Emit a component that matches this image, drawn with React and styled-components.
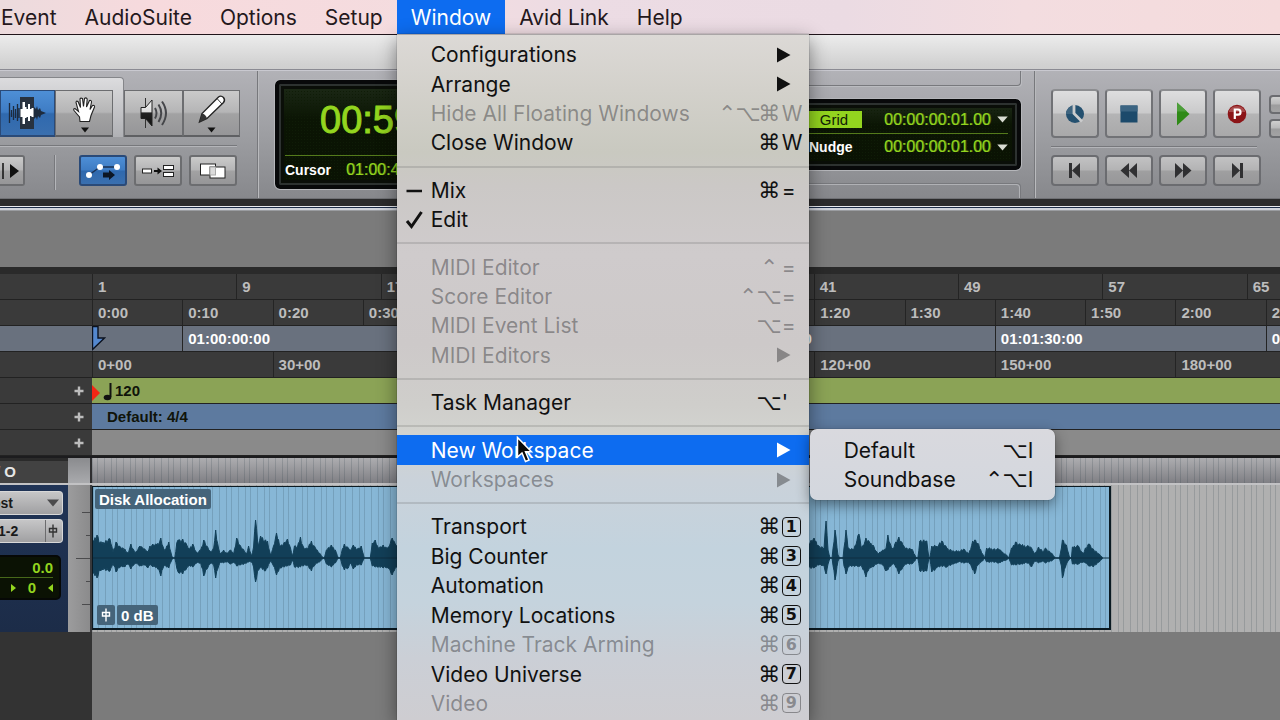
import React from "react";
import styled, { createGlobalStyle, css } from "styled-components";

const Global = createGlobalStyle`
  *, *::before, *::after { box-sizing: border-box; }
  html, body { margin: 0; height: 100%; overflow: hidden; }
  #root { height: 100%; }
  button, select { font: inherit; color: inherit; margin: 0; padding: 0; border: 0; background: none; text-align: left; appearance: none; }
  svg { display: block; flex-shrink: 0; }
`;

const ui = `Inter, "Liberation Sans", sans-serif`;
const app = `"Liberation Sans", Arial, sans-serif`;
const symbol = `"DejaVu Sans", sans-serif`;
const lime = "#93d51f";

const Screen = styled.div`
  display: flex;
  flex-direction: column;
  min-height: 100vh;
  background: #7b7b7b;
  font-family: ${app};
`;

/* ---------- system menu bar ---------- */

const MenuBar = styled.nav`
  display: flex;
  height: 35px;
  padding-left: 1px;
  border-bottom: 1px solid #20141a;
  background: linear-gradient(90deg, #ecdbdd 0, #f7dadd 12%, #f4dcdf 34%, #ecdce4 45%, #ebdbe3 66%, #f3dde0 80%, #f5dbdc 100%);
  font-family: ${ui};
  font-size: 21px;
  color: #24181c;
`;

const BarSlot = styled.div`
  position: relative;
`;

const BarItem = styled.button`
  height: 34px;
  padding: 0 14px;
  white-space: nowrap;
  ${(p) => p.$flush && css`padding-left: 0;`}
  ${(p) => p.$active && css`background: #0d6cf0; color: #fff;`}
`;

const Dropdown = styled.div`
  position: absolute;
  z-index: 5;
  top: 34px;
  left: 0;
  width: 412px;
  height: calc(100vh - 34px);
  display: flex;
  flex-direction: column;
  padding: 5px 0 2px;
  border-top: 1px solid #a9a5a6;
  background: linear-gradient(180deg, #dcd9d6 0, #d3d1cb 8%, #c9c9c0 17%, #cbc8c6 22%, #cfcbcc 32%, #cdc9c9 45%, #cfcecb 54%, #d2d3cf 58%, #cad2da 65%, #c3d3de 75%, #c5d3dd 83%, #cbcfd6 91%, #cecdd1 100%);
  box-shadow: 0 6px 18px rgba(0, 0, 0, 0.45), 0 0 1px rgba(0, 0, 0, 0.5);
  color: #111;
`;

const Submenu = styled.div`
  position: absolute;
  z-index: 6;
  top: -6px;
  left: 100%;
  width: 245px;
  margin-left: 1px;
  padding: 7px 0 6px;
  border-radius: 7px;
  background: linear-gradient(180deg, #d9d9de, #d3d7de);
  box-shadow: 0 5px 14px rgba(0, 0, 0, 0.45), 0 0 1px rgba(0, 0, 0, 0.6);
  color: #111;
`;

const RowSlot = styled.div`
  position: relative;
  display: flex;
  flex: 1 1 29px;
`;

const Row = styled.button`
  display: grid;
  flex: 1;
  grid-template-columns: 26px 1fr auto 20px;
  align-items: center;
  min-height: 29px;
  padding: 0 9px 0 8px;
  line-height: 29px;
  white-space: nowrap;
  ${(p) => p.$active && css`background: #0d6cf0; color: #fff;`}
  &:disabled { color: rgba(40, 40, 44, 0.42); }
`;

const Rule = styled.hr`
  flex: 0 0 2px;
  margin: 8px 0;
  border: 0;
  background: rgba(90, 90, 90, 0.2);
`;

const Modifiers = styled.span`
  display: flex;
  font-family: ${symbol};
  font-size: 22px;
`;

const Modifier = styled.span`
  display: flex;
  justify-content: center;
  width: 21px;
`;

const KeyCap = styled.kbd`
  font-family: ${ui};
  font-size: 21px;
  padding-left: 2px;
  ${(p) => p.$boxed && css`
    width: 19px;
    height: 20px;
    margin-left: 2px;
    padding: 0;
    border: 1px solid currentColor;
    border-radius: 4px;
    font-family: ${symbol};
    font-size: 16px;
    font-weight: bold;
    line-height: 18px;
    text-align: center;
  `}
`;

const Pointer = styled.svg`
  position: absolute;
  z-index: 8;
  left: 119px;
  top: 1px;
`;

/* ---------- toolbar ---------- */

const TitleStrip = styled.header`
  height: 35px;
  border-bottom: 1px solid #8b8b93;
  background: linear-gradient(180deg, #ececec, #d2d2d2 85%, #cfcfcf);
`;

const Toolbar = styled.section`
  display: flex;
  height: 129px;
  border-top: 1px solid #c9c9d0;
  border-bottom: 1px solid #6f7074;
  background: linear-gradient(180deg, #b2b2b7, #9b9ca0 55%, #87888c);
`;

const ToolSection = styled.div`
  width: 258px;
  padding-top: 6px;
  border-right: 1px solid #77787c;
  overflow: hidden;
`;

const ToolRow = styled.div`
  display: flex;
  align-items: flex-end;
`;

const SmartFrame = styled.div`
  display: flex;
  padding: 12px 10px 0 0;
  border: 1px solid #85868a;
  border-width: 1px 1px 0 0;
  border-radius: 0 4px 0 0;
  background: linear-gradient(180deg, #dcdcde, #b0b1b5);
`;

const face = css`
  display: flex;
  align-items: center;
  justify-content: center;
  border: 1px solid #6c6d70;
  background: linear-gradient(180deg, #cacaca, #b5b5b6 48%, #a2a2a3 52%, #969698);
`;

const blueFace = css`
  border-color: #2a4a78;
  background: linear-gradient(180deg, #4e8fd6, #3e7cc4 48%, #2f69ae 52%, #3a6faf);
`;

const ToolButton = styled.button`
  ${face}
  width: ${(p) => p.$w}px;
  height: 47px;
  border-bottom: 2px solid #5f6063;
  ${(p) => p.$on && blueFace}
`;

const Groove = styled.hr`
  height: 2px;
  margin: 8px ${(p) => p.$right}px 0 0;
  border: 0;
  border-top: 1px solid #77787c;
  border-bottom: 1px solid #b4b5b9;
`;

const ModeRow = styled.div`
  display: flex;
  margin-top: 8px;
`;

const ModeButton = styled.button`
  ${face}
  width: 48px;
  height: 31px;
  margin-right: 7px;
  border-width: 2px;
  border-radius: 3px;
  ${(p) => p.$on && blueFace}
  ${(p) => p.$cut && css`width: 25px; border-left: 0; border-radius: 0 3px 3px 0; margin-right: 0;`}
`;

const Divider = styled.span`
  width: 2px;
  height: 35px;
  margin: 0 23px 0 29px;
  border-left: 1px solid #77787c;
  border-right: 1px solid #b4b5b9;
`;

const CounterSection = styled.div`
  display: flex;
  flex: 1;
  gap: 20px;
  padding: 0 14px 0 16px;
  border-left: 1px solid #b9babd;
`;

const Lcd = styled.div`
  border: 4px solid #08090a;
  border-radius: 5px;
  outline: 1px solid #b5b6ba;
  outline-offset: 0;
  background: radial-gradient(#0f1c07 1px, transparent 1px) 0 0 / 3px 3px, linear-gradient(180deg, #1d2a17, #0b1504 35%, #0a1203);
  box-shadow: inset 0 0 0 2px #2d3230, inset 0 0 0 5px #0a0e08;
  color: ${lime};
`;

const MainCounter = styled(Lcd)`
  flex: 0 0 44%;
  height: 109px;
  margin-top: 9px;
  padding: 5px 6px;
  overflow: hidden;
`;

const BigTime = styled.div`
  height: 67px;
  padding-left: 35px;
  border-bottom: 1px solid #547a1b;
  font-size: 38px;
  line-height: 62px;
  -webkit-text-stroke: 1px ${lime};
`;

const CursorLine = styled.div`
  display: flex;
  gap: 15px;
  line-height: 28px;
  font-size: 16px;
  text-shadow: 1px 0 0 rgba(147, 213, 31, 0.5);
`;

const LcdLabel = styled.span`
  color: #fff;
  font-size: 14px;
  font-weight: bold;
  text-shadow: none;
`;

const GridStack = styled.div`
  display: flex;
  flex: 1;
  flex-direction: column;
  justify-content: space-between;
`;

const Bracket = styled.div`
  height: 15px;
  border: 1px solid #78797d;
  box-shadow: 1px 1px 0 #bbbcc0;
  ${(p) => p.$top
    ? css`border-top: 0; border-radius: 0 0 4px 4px;`
    : css`border-bottom: 0; border-radius: 4px 4px 0 0; box-shadow: inset -1px 1px 0 #b0b1b5;`}
`;

const GridLcd = styled(Lcd)`
  height: 71px;
  padding: 3px 9px 7px 6px;
`;

const GridLine = styled.div`
  display: flex;
  align-items: center;
  justify-content: flex-end;
  height: 27px;
  gap: 22px;
  & + & { border-top: 1px solid #547a1b; }
`;

const GridName = styled.button`
  width: 56px;
  height: 17px;
  font-size: 15px;
  line-height: 17px;
  text-align: center;
  background: ${lime};
  color: #122106;
`;

const NudgeName = styled(LcdLabel)`
  width: 53px;
  line-height: 17px;
`;

const Picker = styled.label`
  display: grid;
  align-items: center;
  & > * { grid-area: 1 / 1; }
  & > :last-child { justify-self: end; pointer-events: none; }
`;

const TimeSelect = styled.select`
  width: 124px;
  font-size: 16px;
  line-height: 18px;
  text-shadow: 1px 0 0 rgba(147, 213, 31, 0.5);
`;

const TransportSection = styled.div`
  display: flex;
  gap: 8px;
  width: 245px;
  overflow: hidden;
  padding: 18px 0 0 15px;
  border-left: 1px solid #b9babd;
  box-shadow: -1px 0 0 #77787c;
`;

const TransportBlock = styled.div`
  flex: 0 0 210px;
`;

const TransportRow = styled.div`
  display: flex;
  justify-content: space-between;
  & + hr + & { margin-top: 7px; }
`;

const TransportButton = styled.button`
  ${face}
  width: 48px;
  height: ${(p) => p.$h}px;
  border: 2px solid #717276;
  border-top-color: #8c8d90;
  border-radius: 4px;
  background: linear-gradient(180deg, #dededf, #cacacb 48%, #b4b4b5 52%, #a9a9aa);
  ${(p) => p.$h < 40 && css`
    background: linear-gradient(180deg, #c2c2c3, #b3b3b4 48%, #9f9fa0 52%, #979799);
    border-color: #6b6c70;
  `}
`;

const SideButtons = styled.div`
  display: flex;
  flex-direction: column;
  gap: 5px;
  padding-top: 6px;
`;

const SideButton = styled.button`
  width: 24px;
  height: 19px;
  border: 2px solid #6b6c70;
  border-radius: 4px;
  background: linear-gradient(180deg, #cfcfcf, #b8b8b9 48%, #9c9c9d 52%, #a3a3a4);
`;

const WindowEdge = styled.div`
  height: 12px;
  border-top: 7px solid #2b2b2c;
  background: linear-gradient(180deg, #e8eaee 0 1px, #1c2c48 1px 2px, #cfd3db 2px 4px, #9a9ca0 4px);
`;

const Universe = styled.div`
  height: 56px;
  background: #7b7b7b;
`;

const DarkBand = styled.div`
  height: 7px;
  background: #2a2a2a;
`;

/* ---------- rulers ---------- */

const RulerRow = styled.div`
  display: flex;
  height: 26px;
  border-bottom: 1px solid #222;
  background: ${(p) => p.$bg || "#3a3a3a"};
  color: ${(p) => p.$color || "#bdbdbd"};
  font-size: 15px;
  font-weight: bold;
  line-height: 25px;
`;

const RulerHead = styled.div`
  display: flex;
  align-items: center;
  justify-content: flex-end;
  flex: 0 0 92px;
  padding-right: 7px;
  background: ${(p) => (p.$open ? "transparent" : "#3a3a3a")};
`;

const AddButton = styled.button`
  width: 12px;
  height: 12px;
`;

const Ticks = styled.div`
  display: flex;
  flex: 1;
  min-width: 0;
  overflow: hidden;
`;

const Tick = styled.span`
  flex: 0 0 ${(p) => p.$w}%;
  padding-left: 5px;
  border-left: 1px solid #242424;
  white-space: nowrap;
`;

const StartMark = styled.span`
  flex: 0 0 7.6%;
`;

const EventText = styled.span`
  display: flex;
  align-items: center;
  gap: 3px;
  padding-left: ${(p) => p.$pad}px;
  color: #10140a;
`;

/* ---------- track ---------- */

const stripes = `repeating-linear-gradient(90deg, rgba(30,50,60,0.17) 0 1px, transparent 1px 5px, rgba(30,50,60,0.17) 5px 6px, transparent 6px 12px, rgba(30,50,60,0.17) 12px 13px, transparent 13px 19px)`;

const TrackHead = styled.div`
  display: flex;
  height: 29px;
  border-top: 2px solid #1c1c1e;
  border-bottom: 2px solid #c2c2c4;
`;

const IoTitle = styled.h2`
  flex: 0 0 68px;
  margin: 0;
  overflow: hidden;
  border-top: 3px solid #2a2a2a;
  background: #424242;
  color: #e6e6e6;
  font-size: 15px;
  line-height: 22px;
  text-indent: -4px;
`;

const HeadCap = styled.div`
  flex: 0 0 24px;
  border-right: 2px solid #2e2e30;
  background: linear-gradient(180deg, #8a8b8e, #a9aaad);
`;

const HeadLane = styled.div`
  flex: 1;
  background: ${stripes}, linear-gradient(180deg, #adadb0, #7f7f84);
`;

const TrackBody = styled.div`
  display: flex;
  height: 147px;
`;

const IoPanel = styled.div`
  display: flex;
  flex: 0 0 68px;
  flex-direction: column;
  gap: 4px;
  overflow: hidden;
  padding: 6px 5px 0 0;
  background: linear-gradient(180deg, #203456, #1c2c48);
  color: #1a1a1a;
  font-size: 14px;
  font-weight: bold;
`;

const IoPicker = styled(Picker)`
  height: 24px;
  padding-right: 3px;
  border: 1px solid #d8d8d8;
  border-left: 0;
  border-radius: 0 4px 4px 0;
  background: linear-gradient(180deg, #c6c6c7, #a0a0a2);
`;

const IoSelect = styled.select`
  width: 40px;
  text-indent: ${(p) => p.$shift}px;
`;

const FaderCell = styled.span`
  display: grid;
  place-items: center;
  width: 14px;
  height: 22px;
  border-left: 1px solid #6c6c6e;
`;

const PanLcd = styled.div`
  height: 45px;
  margin: 8px 2px 0 0;
  padding: 0 6px 0 0;
  border: 2px solid #060806;
  border-left: 0;
  border-radius: 0 5px 5px 0;
  background: #0b1204;
  color: ${lime};
  font-size: 15px;
`;

const PanLine = styled.div`
  display: flex;
  align-items: center;
  justify-content: flex-end;
  gap: 12px;
  height: 20px;
  & + & { border-top: 1px solid #47681a; }
`;

const Scale = styled.div`
  display: flex;
  flex: 0 0 24px;
  justify-content: flex-end;
  border-right: 2px solid #39393b;
  background: linear-gradient(90deg, #9c9c9d, #8b8b8c);
`;

const Lane = styled.div`
  flex: 1;
  min-width: 0;
  padding: 1px 0 2px;
  background: ${stripes}, #b0b0b0;
`;

const Clip = styled.article`
  position: relative;
  width: 85.8%;
  height: 144px;
  border: 1px solid #0b1a22;
  border-width: 1px 2px 2px 1px;
  background: ${stripes}, #87b7d6;
`;

const Wave = styled.svg`
  width: 100%;
  height: 141px;
`;

const ClipTag = styled.span`
  display: inline-flex;
  align-items: center;
  height: 20px;
  padding: 0 4px;
  border-radius: 2px;
  background: #45647a;
  color: #fff;
  font-size: 15px;
  font-weight: bold;
`;

const ClipName = styled(ClipTag)`
  position: absolute;
  left: 2px;
  top: 2px;
`;

const ClipGain = styled.div`
  position: absolute;
  left: 4px;
  bottom: 3px;
  display: flex;
  gap: 2px;
`;

const Rest = styled.div`
  flex: 1;
  background: linear-gradient(90deg, #333 0 92px, #7b7b7b 92px);
`;

/* ---------- drawings ---------- */

const Arrow = () => (
  <svg width="14" height="16" viewBox="0 0 14 16"><path d="M0 0.5L13.5 8L0 15.5Z" fill="currentColor" /></svg>
);
const Down = ({ w = 11, h = 7, color = "#d8dcd2" }) => (
  <svg width={w} height={h} viewBox="0 0 12 8"><path d="M0 0.5H12L6 7.5Z" fill={color} /></svg>
);
const Check = () => (
  <svg width="20" height="20" viewBox="0 0 20 20"><path d="M2 11L6.5 16.5L16.500 2" fill="none" stroke="currentColor" strokeWidth="3" /></svg>
);
const Dash = () => (
  <svg width="20" height="20" viewBox="0 0 20 20"><path d="M1.5 11H17" stroke="currentColor" strokeWidth="2.5" /></svg>
);
const Plus = () => (
  <svg width="12" height="12" viewBox="0 0 12 12"><path d="M6 1.5V10.5M1.5 6H10.5" stroke="#bcbcbc" strokeWidth="2.4" /></svg>
);
const Fader = ({ color }) => (
  <svg width="10" height="14" viewBox="0 0 10 14"><path d="M5 0.5V13.5M1.5 4.5H8.5V8H1.5Z" fill="none" stroke={color} strokeWidth="1.4" /></svg>
);

const SelectorIcon = () => (
  <svg width="40" height="36" viewBox="0 0 40 36">
    <rect x="12" y="2" width="14" height="32" fill="#28323f" />
    <path d="M1.500 8V28M3.500 15V22M5.500 11V25M7.500 14V23M9.500 9V26M11 13V23" stroke="#1d2b3d" strokeWidth="1.300" />
    <path d="M26 12L28 14L29 11L30 15L32 13L33 16L38 18L33 20L32 23L30 21L29 25L28 22L26 24Z" fill="#1d2b3d" />
    <path d="M12.500 14H14.500V7H17V12H18.500V14H20V9H22V14H23.500V13H25.500V22H23.500V21H22V26H20V22H18.500V23H17V29H14.500V22H12.500Z" fill="#fff" />
  </svg>
);
const HandIcon = () => (
  <svg width="26" height="40" viewBox="0 0 26 40">
    <path d="M9 28.500L8.500 24L3 17.500Q2 15.500 4 15.500L7.500 18.500L5 9.500Q5 7.500 7 8.500L9.500 14.500L9 6Q9.500 4.500 11.500 5.500L12.500 13.500L13.500 5.500Q15 4 16.200 6L15.500 14L18.500 7.500Q20.500 7 20.500 9L19 16.500L21.500 12.500Q24 12 23.500 14L20 22.500L18.500 28.500Z" fill="#fff" stroke="#222" strokeWidth="1.1" />
    <path d="M10 34.500H18L14 39.500Z" fill="#111" />
  </svg>
);
const SpeakerIcon = () => (
  <svg width="30" height="34" viewBox="0 0 30 34">
    <defs><linearGradient id="cone" x1="0" y1="0" x2="0" y2="1"><stop offset="0" stopColor="#f4f4f4" /><stop offset=".45" stopColor="#ddd" /><stop offset=".5" stopColor="#222" /><stop offset="1" stopColor="#111" /></linearGradient></defs>
    <path d="M6.500 2V32" stroke="#333" strokeWidth="1" />
    <path d="M2 11.500H6.500L13 4V30L6.500 22.500H2Z" fill="url(#cone)" stroke="#222" />
    <path d="M16 12Q19 17 16 22.500M19.500 8.500Q25 17 19.500 26M23 5.500Q31 17 23 29" fill="none" stroke="#45464a" strokeWidth="2" />
  </svg>
);
const PencilIcon = () => (
  <svg width="30" height="40" viewBox="0 0 30 40">
    <path d="M2.500 29L5 20.500L21.500 4Q24 2 26.500 4.500Q28.500 7 26.500 9.500L10 25.500Z" fill="#fff" stroke="#222" strokeWidth="1.400" />
    <path d="M2.500 29L5 20.500Q8.500 21 10 25.500Z" fill="#333" />
    <path d="M20 5.500L25 11" stroke="#333" />
    <path d="M10.500 34.500H18.500L14.500 39.500Z" fill="#111" />
  </svg>
);
const TabIcon = () => (
  <svg width="24" height="20" viewBox="0 0 24 20"><path d="M3 2V18" stroke="#111" strokeWidth="1.500" /><path d="M10 3L19 10L10 17Z" fill="#111" /></svg>
);
const AutomationIcon = () => (
  <svg width="38" height="20" viewBox="0 0 38 20">
    <path d="M5 14L16 6H33" fill="none" stroke="#1b3050" strokeWidth="1.300" />
    <circle cx="5" cy="14" r="3" fill="#fff" /><circle cx="16" cy="6" r="3" fill="#fff" /><circle cx="33" cy="6" r="3" fill="#fff" />
    <path d="M19 11.500H25V9L31 14L25 19V16.500H19Z" fill="#0c1624" />
  </svg>
);
const MirrorIcon = () => (
  <svg width="34" height="16" viewBox="0 0 34 16">
    <rect x="1.500" y="6" width="9" height="4" fill="#fff" stroke="#222" />
    <path d="M13 8H18" stroke="#111" strokeWidth="2" /><path d="M16.500 4.500L21 8L16.500 11.500Z" fill="#111" />
    <rect x="22.500" y="2.500" width="10" height="4" fill="#fff" stroke="#222" /><rect x="22.500" y="9.500" width="10" height="4" fill="#fff" stroke="#222" />
  </svg>
);
const LayersIcon = () => (
  <svg width="28" height="18" viewBox="0 0 28 18">
    <rect x="1.500" y="2" width="15" height="11" fill="#fff" stroke="#222" />
    <rect x="11" y="5" width="15" height="11" fill="#fff" stroke="#222" />
    <rect x="11" y="5" width="5.500" height="8" fill="#dcdcdc" stroke="#aaa" />
  </svg>
);
const OnlineIcon = () => (
  <svg width="20" height="20" viewBox="0 0 20 20">
    <circle cx="10" cy="10" r="9" fill="#24506f" />
    <path d="M1 10A9 9 0 0 1 10 1V10Z" fill="#3f6580" />
    <path d="M9 0V9.500L17 17.500" fill="none" stroke="#cbcccd" strokeWidth="2.800" />
  </svg>
);
const StopIcon = () => (
  <svg width="18" height="18" viewBox="0 0 18 18"><rect x="0.500" y="0.500" width="17" height="17" fill="#1c4a6b" /><rect x="0.500" y="0.500" width="17" height="6" fill="#3b6482" /></svg>
);
const PlayIcon = () => (
  <svg width="14" height="24" viewBox="0 0 14 24"><path d="M1 0.500L13.500 12L1 23.500Z" fill="#2f8a17" /><path d="M1 0.500L11 9.500H1Z" fill="#4d9e3a" /></svg>
);
const PunchIcon = () => (
  <svg width="20" height="20" viewBox="0 0 20 20">
    <circle cx="10" cy="10" r="9.300" fill="#8c1518" /><path d="M1.500 8A9 9 0 0 1 18.500 8Z" fill="#a84a4b" />
    <path d="M7.800 15V5.500H11Q13.500 5.500 13.500 8.200Q13.500 10.700 11 10.700H8" fill="none" stroke="#fff" strokeWidth="2.200" />
  </svg>
);
const Seek = ({ d }) => (
  <svg width="18" height="15" viewBox="0 0 18 15"><path d={d} fill="#303032" /></svg>
);

/* envelope of the recording: [x, above, below], in lane pixels */
const envelope = `0,17,15 4,23,20 7,15,12 10,16,12 17,19,13 20,6,5 23,16,14 28,10,8 32,9,9 35,5,6 38,14,11 42,5,5 47,12,8 52,9,7 55,6,10 57,12,7 60,14,9 64,13,9 68,20,18 71,9,8 73,9,8 76,16,10 79,2,2 80,0,0 82,0,0 84,15,10 86,18,15 90,19,16 94,13,10 96,9,8 100,14,9 104,5,5 108,8,5 111,18,18 115,11,10 118,6,5 121,10,7 123,28,20 126,9,8 128,4,4 131,8,5 134,5,4 138,8,6 141,4,4 144,20,8 148,12,7 154,4,5 156,12,4 159,2,4 161,11,9 163,38,24 166,12,12 168,22,9 172,17,13 175,17,10 178,3,3 181,12,8 184,25,17 188,12,10 192,16,9 195,19,8 198,10,7 200,2,2 202,12,9 205,11,9 208,21,9 211,11,8 215,9,7 219,17,13 223,10,6 227,5,4 230,1,1 232,0,0 234,8,6 239,13,9 243,8,5 246,0,0 248,0,0 250,9,8 252,14,12 256,10,10 258,8,5 261,13,11 265,9,7 269,12,7 272,0,0 278,0,0 280,15,8 283,18,9 286,10,9 291,13,10 295,9,9 300,20,17 303,14,10 306,10,8 500,12,9 717,14,10 723,20,10 728,12,7 733,10,8 735,37,16 737,8,6 739,0,0 741,0,0 744,28,22 747,3,3 749,0,0 752,0,0 753,10,8 755,28,16 757,10,9 763,9,8 768,24,8 771,10,9 775,20,19 778,17,11 782,13,9 787,4,5 792,8,7 795,9,13 797,23,12 801,8,6 804,14,7 808,21,16 812,13,9 816,10,6 821,9,6 824,3,3 826,0,0 827,0,0 829,17,13 836,17,13 838,1,1 839,0,0 841,12,14 846,12,10 851,17,8 856,10,9 863,7,6 868,7,4 873,9,5 878,4,4 882,17,12 884,18,16 887,15,7 892,4,3 894,0,0 896,10,4 903,9,4 908,9,5 916,3,2 918,0,0 921,10,7 925,16,7 930,13,6 938,12,5 941,10,9 944,4,3 948,11,5 953,6,3 955,10,5 961,5,3 965,0,0 969,0,0 971,10,8 972,18,20 976,13,6 979,1,1 981,0,0 982,11,6 988,12,6 993,4,4 995,10,5 999,14,8 1003,9,9 1013,0,0`
  .split(" ")
  .map((p) => p.split(",").map(Number));

function wavePath(mid) {
  const above = [];
  const below = [];
  for (let i = 0; i < envelope.length - 1; i++) {
    const [x0, u0, d0] = envelope[i];
    const [x1, u1, d1] = envelope[i + 1];
    for (let x = x0; x < x1; x++) {
      const t = (x - x0) / (x1 - x0);
      const grain = x === x0 ? 1 : 0.82 + ((x * 37) % 11) / 40;
      above.push(`${x} ${(mid - (u0 + (u1 - u0) * t) * grain).toFixed(1)}`);
      below.push(`${x} ${(mid + (d0 + (d1 - d0) * t) * grain).toFixed(1)}`);
    }
  }
  return `M${above.join("L")}L${below.reverse().join("L")}Z`;
}

/* ---------- data ---------- */

const barItems = ["Event", "AudioSuite", "Options", "Setup", "Window", "Avid Link", "Help"];

const menu = [
  { label: "Configurations", sub: true },
  { label: "Arrange", sub: true },
  { label: "Hide All Floating Windows", mods: "⌃⌥⌘", keyName: "W", off: true },
  { label: "Close Window", mods: "⌘", keyName: "W" },
  null,
  { label: "Mix", mark: <Dash />, mods: "⌘", keyName: "=" },
  { label: "Edit", mark: <Check /> },
  null,
  { label: "MIDI Editor", mods: "⌃", keyName: "=", off: true },
  { label: "Score Editor", mods: "⌃⌥", keyName: "=", off: true },
  { label: "MIDI Event List", mods: "⌥", keyName: "=", off: true },
  { label: "MIDI Editors", sub: true, off: true },
  null,
  { label: "Task Manager", mods: "⌥", keyName: "'" },
  null,
  { label: "New Workspace", sub: true, open: true },
  { label: "Workspaces", sub: true, off: true },
  null,
  { label: "Transport", mods: "⌘", keyName: "1", boxed: true },
  { label: "Big Counter", mods: "⌘", keyName: "3", boxed: true },
  { label: "Automation", mods: "⌘", keyName: "4", boxed: true },
  { label: "Memory Locations", mods: "⌘", keyName: "5", boxed: true },
  { label: "Machine Track Arming", mods: "⌘", keyName: "6", boxed: true, off: true },
  { label: "Video Universe", mods: "⌘", keyName: "7", boxed: true },
  { label: "Video", mods: "⌘", keyName: "9", boxed: true, off: true },
];

const workspaceItems = [
  { label: "Default", mods: "⌥", keyName: "I" },
  { label: "Soundbase", mods: "⌃⌥", keyName: "I" },
];

const bars = ["1", "9", "17", "", "", "41", "49", "57", "65"];
const minutes = ["0:00", "0:10", "0:20", "0:30", "", "", "", "", "1:20", "1:30", "1:40", "1:50", "2:00", "2:10"];
const timecodes = ["01:00:00:00", "", "01:01:00:00", "01:01:30:00", "01:02:00:00"];
const feet = ["0+00", "30+00", "", "", "120+00", "150+00", "180+00"];

const ArrowCell = styled.span`
  grid-column: 3 / 5;
  justify-self: end;
  padding-right: 9px;
`;

function MenuRow({ item, children }) {
  return (
    <RowSlot>
      <Row role="menuitem" disabled={item.off} $active={item.open}>
        <span>{item.mark}</span>
        <span>{item.label}</span>
        {item.sub ? (
          <ArrowCell><Arrow /></ArrowCell>
        ) : (
          <>
            <Modifiers>{[...(item.mods || "")].map((m) => <Modifier key={m}>{m}</Modifier>)}</Modifiers>
            {item.keyName && <KeyCap $boxed={item.boxed}>{item.keyName}</KeyCap>}
          </>
        )}
      </Row>
      {children}
    </RowSlot>
  );
}

function WindowMenu() {
  return (
    <Dropdown role="menu" aria-label="Window">
      {menu.map((item, i) =>
        item === null ? (
          <Rule key={i} />
        ) : (
          <MenuRow key={item.label} item={item}>
            {item.open && (
              <>
                <Submenu role="menu" aria-label={item.label}>
                  {workspaceItems.map((w) => <MenuRow key={w.label} item={w} />)}
                </Submenu>
                <Pointer width="18" height="28" viewBox="0 0 18 28" aria-hidden="true">
                  <path d="M1.500 1.500V21L6 17L9.500 25.500L13 24L9.500 15.800H15.500Z" fill="#0a0a0a" stroke="#fff" strokeWidth="1.500" />
                </Pointer>
              </>
            )}
          </MenuRow>
        )
      )}
    </Dropdown>
  );
}

function EditToolbar() {
  return (
    <Toolbar aria-label="Edit tools">
      <ToolSection>
        <ToolRow>
          <SmartFrame>
            <ToolButton $w={55} $on aria-label="Selector"><SelectorIcon /></ToolButton>
            <ToolButton $w={58} aria-label="Grabber"><HandIcon /></ToolButton>
          </SmartFrame>
          <ToolButton $w={59} aria-label="Scrubber"><SpeakerIcon /></ToolButton>
          <ToolButton $w={57} aria-label="Pencil"><PencilIcon /></ToolButton>
        </ToolRow>
        <Groove $right={20} />
        <ModeRow>
          <ModeButton $cut aria-label="Tab to transient"><TabIcon /></ModeButton>
          <Divider />
          <ModeButton $on aria-label="Automation follows edit"><AutomationIcon /></ModeButton>
          <ModeButton aria-label="Mirrored editing"><MirrorIcon /></ModeButton>
          <ModeButton aria-label="Layered editing"><LayersIcon /></ModeButton>
        </ModeRow>
      </ToolSection>
      <CounterSection>
        <MainCounter>
          <BigTime>00:59</BigTime>
          <CursorLine><LcdLabel>Cursor</LcdLabel><span>01:00:4</span></CursorLine>
        </MainCounter>
        <GridStack>
          <Bracket $top />
          <GridLcd>
            <GridLine>
              <GridName>Grid</GridName>
              <Picker>
                <TimeSelect aria-label="Grid value"><option>00:00:00:01.00</option></TimeSelect>
                <Down />
              </Picker>
            </GridLine>
            <GridLine>
              <NudgeName>Nudge</NudgeName>
              <Picker>
                <TimeSelect aria-label="Nudge value"><option>00:00:00:01.00</option></TimeSelect>
                <Down />
              </Picker>
            </GridLine>
          </GridLcd>
          <Bracket />
        </GridStack>
      </CounterSection>
      <TransportSection>
        <TransportBlock>
          <TransportRow>
            <TransportButton $h={49} aria-label="Online"><OnlineIcon /></TransportButton>
            <TransportButton $h={49} aria-label="Stop"><StopIcon /></TransportButton>
            <TransportButton $h={49} aria-label="Play"><PlayIcon /></TransportButton>
            <TransportButton $h={49} aria-label="Record"><PunchIcon /></TransportButton>
          </TransportRow>
          <Groove $right={4} />
          <TransportRow>
            <TransportButton $h={31} aria-label="Return to zero"><Seek d="M3 0H6V15H3ZM14 0V15L6 7.500Z" /></TransportButton>
            <TransportButton $h={31} aria-label="Rewind"><Seek d="M9 0V15L0.500 7.500ZM17 0V15L9 7.500Z" /></TransportButton>
            <TransportButton $h={31} aria-label="Fast forward"><Seek d="M1 0V15L9 7.500ZM9 0V15L17.500 7.500Z" /></TransportButton>
            <TransportButton $h={31} aria-label="Go to end"><Seek d="M4 0V15L12 7.500ZM12 0H15V15H12Z" /></TransportButton>
          </TransportRow>
        </TransportBlock>
        <SideButtons>
          <SideButton aria-label="Pre-roll" />
          <SideButton aria-label="Post-roll" />
        </SideButtons>
      </TransportSection>
    </Toolbar>
  );
}

function Rulers() {
  return (
    <section aria-label="Rulers">
      <RulerRow>
        <RulerHead />
        <Ticks>{bars.map((b, i) => <Tick key={i} $w={12.15}>{b}</Tick>)}</Ticks>
      </RulerRow>
      <RulerRow>
        <RulerHead />
        <Ticks>{minutes.map((m, i) => <Tick key={i} $w={7.6}>{m}</Tick>)}</Ticks>
      </RulerRow>
      <RulerRow $bg="#69717e" $color="#fff">
        <RulerHead $open />
        <Ticks>
          <StartMark>
            <svg width="14" height="25" viewBox="0 0 14 25"><path d="M0.500 0.500H6V12H12.500L0.500 23.500Z" fill="#5488cf" stroke="#0b1220" strokeWidth="1.400" /></svg>
          </StartMark>
          {timecodes.map((t, i) => <Tick key={i} $w={22.8}>{t}</Tick>)}
        </Ticks>
      </RulerRow>
      <RulerRow>
        <RulerHead />
        <Ticks>{feet.map((f, i) => <Tick key={i} $w={15.2}>{f}</Tick>)}</Ticks>
      </RulerRow>
      <RulerRow $bg="#8ba356">
        <RulerHead><AddButton aria-label="Add tempo change"><Plus /></AddButton></RulerHead>
        <EventText $pad={0}>
          <svg width="20" height="20" viewBox="0 0 20 20">
            <path d="M0 4V20L8 12Z" fill="#f42613" />
            <path d="M18.500 2V16" stroke="#111" strokeWidth="2" /><ellipse cx="15.500" cy="16.500" rx="3.800" ry="2.800" fill="#111" />
          </svg>
          120
        </EventText>
      </RulerRow>
      <RulerRow $bg="#5d7a9f">
        <RulerHead><AddButton aria-label="Add meter change"><Plus /></AddButton></RulerHead>
        <EventText $pad={15}>Default: 4/4</EventText>
      </RulerRow>
      <RulerRow $bg="#8a8a8a">
        <RulerHead><AddButton aria-label="Add marker"><Plus /></AddButton></RulerHead>
      </RulerRow>
    </section>
  );
}

function Track() {
  return (
    <section aria-label="Audio track">
      <TrackHead>
        <IoTitle>/ O</IoTitle>
        <HeadCap />
        <HeadLane />
      </TrackHead>
      <TrackBody>
        <IoPanel>
          <IoPicker>
            <IoSelect $shift={-8} aria-label="Input"><option>ost</option></IoSelect>
            <Down w={12} h={8} color="#4b4b4d" />
          </IoPicker>
          <IoPicker>
            <IoSelect $shift={-2} aria-label="Output"><option>1-2</option></IoSelect>
            <FaderCell><Fader color="#333" /></FaderCell>
          </IoPicker>
          <PanLcd>
            <PanLine>0.0</PanLine>
            <PanLine>
              <svg width="5" height="8" viewBox="0 0 5 8"><path d="M0 0V8L5 4Z" fill={lime} /></svg>
              0
              <svg width="5" height="8" viewBox="0 0 5 8"><path d="M5 0V8L0 4Z" fill={lime} /></svg>
            </PanLine>
          </PanLcd>
        </IoPanel>
        <Scale>
          <svg width="14" height="147" viewBox="0 0 14 147"><path d="M6 27.500H14M10 50.500H14M0 73.500H14M10 96.500H14M6 119.500H14" stroke="#4b4b4d" strokeWidth="1" /></svg>
        </Scale>
        <Lane>
          <Clip>
            <Wave viewBox="0 0 1019 141" preserveAspectRatio="none" aria-hidden="true">
              <path d={wavePath(71)} fill="#123f58" stroke="#123f58" strokeWidth="1" />
              <path d="M0 71H1019" stroke="#0e2e40" strokeWidth="1" />
            </Wave>
            <ClipName>Disk Allocation</ClipName>
            <ClipGain>
              <ClipTag><Fader color="#fff" /></ClipTag>
              <ClipTag>0 dB</ClipTag>
            </ClipGain>
          </Clip>
        </Lane>
      </TrackBody>
    </section>
  );
}

export default function App() {
  return (
    <Screen>
      <Global />
      <MenuBar>
        {barItems.map((name, i) => (
          <BarSlot key={name}>
            <BarItem $flush={i === 0} $active={name === "Window"}>{name}</BarItem>
            {name === "Window" && <WindowMenu />}
          </BarSlot>
        ))}
      </MenuBar>
      <TitleStrip />
      <EditToolbar />
      <WindowEdge />
      <Universe />
      <DarkBand />
      <Rulers />
      <Track />
      <Rest />
    </Screen>
  );
}
